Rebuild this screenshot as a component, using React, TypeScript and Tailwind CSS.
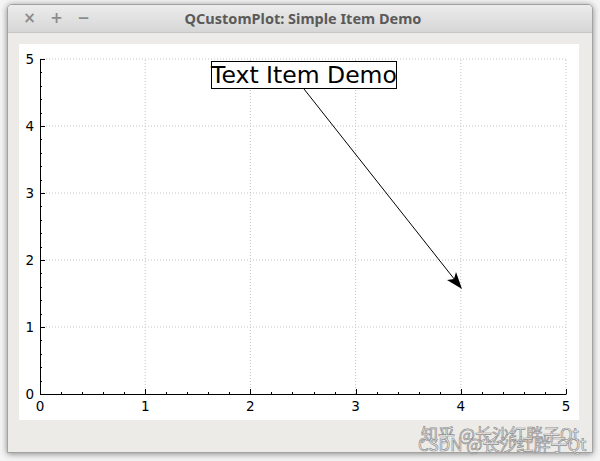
import React from 'react';

// plot geometry (svg coords inside the white plot area)
const X0 = 21;
const XS = 105.2;
const Y0 = 350;
const YS = 67;

const px = (v: number) => X0 + v * XS;
const py = (v: number) => Y0 - v * YS;

const majors = [0, 1, 2, 3, 4, 5];
const minors: number[] = [];
for (let i = 0; i < 5; i++) {
  for (let j = 1; j < 5; j++) minors.push(i + j * 0.2);
}

const font = "'DejaVu Sans', 'Noto Sans CJK SC', sans-serif";

const Plot: React.FC = () => (
  <svg width={560} height={376} className="block">
    {/* grid */}
    {majors.map((v) => (
      <g key={'g' + v}>
        {v > 0 && (
          <line x1={px(v)} y1={py(0)} x2={px(v)} y2={py(5)} stroke="#c4c4c4" strokeDasharray="1 2" />
        )}
        {v > 0 && (
          <line x1={px(0)} y1={py(v)} x2={px(5)} y2={py(v)} stroke="#c4c4c4" strokeDasharray="1 2" />
        )}
      </g>
    ))}

    {/* axes */}
    <line x1={px(0)} y1={py(0) + 0.5} x2={px(5) + 0.5} y2={py(0) + 0.5} stroke="#000" />
    <line x1={px(0) + 0.5} y1={py(0) + 0.5} x2={px(0) + 0.5} y2={py(5)} stroke="#000" />

    {majors.map((v) => (
      <g key={'t' + v}>
        <line x1={Math.round(px(v)) + 0.5} y1={py(0)} x2={Math.round(px(v)) + 0.5} y2={py(0) - 5} stroke="#000" />
        <line x1={px(0)} y1={Math.round(py(v)) + 0.5} x2={px(0) + 5} y2={Math.round(py(v)) + 0.5} stroke="#000" />
        <text x={px(v)} y={py(0) + 17} fontSize={13.5} fontFamily={font} textAnchor="middle" fill="#000">
          {v}
        </text>
        <text x={px(0) - 6} y={py(v) + 5} fontSize={13.5} fontFamily={font} textAnchor="end" fill="#000">
          {v}
        </text>
      </g>
    ))}
    {minors.map((v) => (
      <g key={'m' + v}>
        <line x1={Math.round(px(v)) + 0.5} y1={py(0)} x2={Math.round(px(v)) + 0.5} y2={py(0) - 2} stroke="#000" />
        <line x1={px(0)} y1={Math.round(py(v)) + 0.5} x2={px(0) + 2} y2={Math.round(py(v)) + 0.5} stroke="#000" />
      </g>
    ))}

    {/* text item */}
    <rect x={192.5} y={17.5} width={185} height={27} fill="#fff" stroke="#000" />
    <text x={285} y={39} fontSize={23.5} fontFamily={font} textAnchor="middle" fill="#000">
      Text Item Demo
    </text>

    {/* arrow */}
    <line x1={285} y1={45} x2={436} y2={236} stroke="#000" strokeWidth={1} />
    <polygon points="443,245 428,236 435,235 437,228" fill="#000" />
  </svg>
);

export default function App() {
  return (
    <div className="w-[600px] h-[461px] bg-[#f4f4f4] pt-[4px] px-[7px] pb-[8px] relative overflow-hidden">
      <div className="h-full flex flex-col border border-[#a2a2a2] rounded-t-[5px] bg-[#edebe8] shadow-[0_1px_6px_rgba(0,0,0,0.45)] overflow-hidden">
        {/* title bar */}
        <div className="h-[28px] shrink-0 relative flex items-center justify-center bg-gradient-to-b from-[#ececec] to-[#d6d6d6] border-b border-[#c6c6c6]">
          <div className="absolute left-[14px] top-0 h-full flex items-center gap-[12px] text-[#8c8c8c] text-[15px] font-bold font-['DejaVu_Sans',sans-serif]">
            <span className="w-[15px] text-center">×</span>
            <span className="w-[15px] text-center">+</span>
            <span className="w-[15px] text-center">−</span>
          </div>
          <span className="text-[14.5px] font-bold text-[#5a5a5a] font-['Noto_Sans',sans-serif] ml-[6px]">
            QCustomPlot: Simple Item Demo
          </span>
        </div>

        {/* content */}
        <div className="flex-1 pt-[11px] px-[11px]">
          <div className="w-[560px] h-[376px] bg-white">
            <Plot />
          </div>
        </div>
      </div>

      {/* watermark */}
      <div className="absolute left-[421px] top-[425px] text-[17px] leading-none text-[#f5f5f5] [-webkit-text-stroke:0.7px_#8f8f8f] font-['Noto_Sans_CJK_SC',sans-serif] whitespace-nowrap">
        知乎 @长沙红胖子Qt
      </div>
      <div className="absolute left-[418px] top-[435px] text-[17px] leading-none text-[#f5f5f5] [-webkit-text-stroke:0.7px_#8f8f8f] font-['Noto_Sans_CJK_SC',sans-serif] whitespace-nowrap">
        CSDN @长沙红胖子Qt
      </div>
    </div>
  );
}
